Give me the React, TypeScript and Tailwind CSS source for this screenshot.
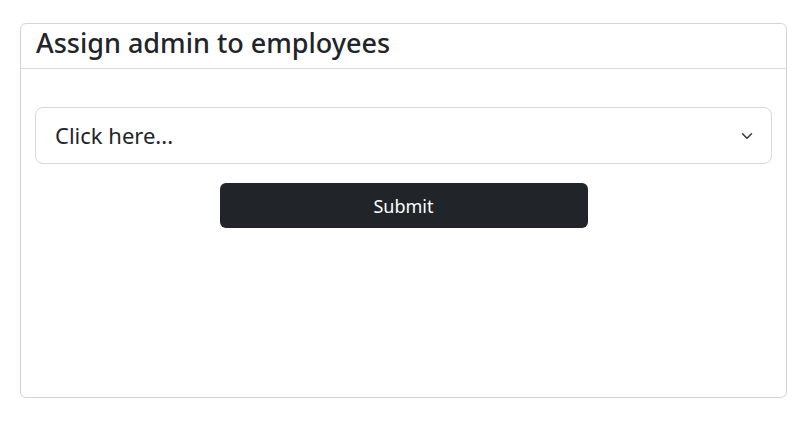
import React from "react";

export default function App() {
  return (
    <div className="min-h-[438px] bg-white pt-[23px] pl-[20px] pr-[19px]" style={{ fontFamily: '"Noto Sans", "Open Sans", sans-serif' }}>
      <div className="w-[767px] h-[375px] border border-[#d3d5d8] rounded-[6px] flex flex-col">
        <div className="h-[45px] border-b border-[#d9dbde] px-[15px] pt-[4px]">
          <h2 className="text-[27px] leading-[29px] text-[#212529] font-medium">Assign admin to employees</h2>
        </div>
        <div className="px-[14px] pt-[38px] flex flex-col items-center">
          <div className="w-full h-[57px] border border-[#d6d8db] rounded-[8px] flex items-center justify-between pl-[19px] pr-[16px]">
            <span className="text-[22px] text-[#212529]">Click here...</span>
            <svg width="16" height="12" viewBox="0 0 16 16" fill="none">
              <path d="m2 5 6 6 6-6" stroke="#343a40" strokeWidth="2" strokeLinecap="round" strokeLinejoin="round" />
            </svg>
          </div>
          <button className="mt-[19px] w-[368px] h-[45px] pt-[2px] bg-[#212529] rounded-[6px] text-white text-[18px]">
            Submit
          </button>
        </div>
      </div>
    </div>
  );
}
